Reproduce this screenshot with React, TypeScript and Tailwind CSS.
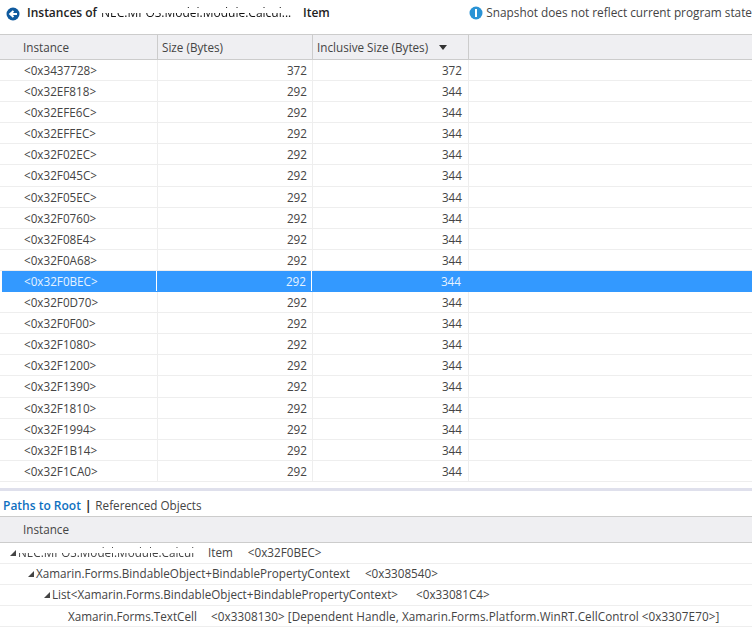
const rows = [
  ["<0x3437728>", "372", "372"],
  ["<0x32EF818>", "292", "344"],
  ["<0x32EFE6C>", "292", "344"],
  ["<0x32EFFEC>", "292", "344"],
  ["<0x32F02EC>", "292", "344"],
  ["<0x32F045C>", "292", "344"],
  ["<0x32F05EC>", "292", "344"],
  ["<0x32F0760>", "292", "344"],
  ["<0x32F08E4>", "292", "344"],
  ["<0x32F0A68>", "292", "344"],
  ["<0x32F0BEC>", "292", "344"],
  ["<0x32F0D70>", "292", "344"],
  ["<0x32F0F00>", "292", "344"],
  ["<0x32F1080>", "292", "344"],
  ["<0x32F1200>", "292", "344"],
  ["<0x32F1390>", "292", "344"],
  ["<0x32F1810>", "292", "344"],
  ["<0x32F1994>", "292", "344"],
  ["<0x32F1B14>", "292", "344"],
  ["<0x32F1CA0>", "292", "344"],
];

function Caret() {
  return (
    <svg width="8" height="8" viewBox="0 0 8 8" className="shrink-0">
      <path d="M7 1 V7 H1 Z" fill="#444" />
    </svg>
  );
}

function Redacted({ text, className }: { text: string; className: string }) {
  return (
    <span className={`relative overflow-hidden whitespace-nowrap blur-[0.4px] ${className}`}>
      {text}
      <span className="absolute left-0 right-0 top-[4px] h-[5px] bg-white" />
    </span>
  );
}

function Row({ cells, selected }: { cells: string[]; selected: boolean }) {
  return (
    <div className={`flex h-[21.1px] items-center border-b ${selected ? "ml-[2px] border-[#3399ff] bg-[#3399ff] text-[#e6f3ff]" : "border-[#eeeeee]"}`}>
      <div className={`h-full border-r leading-[21px] ${selected ? "w-[155px] border-white pl-[22px]" : "w-[158px] border-[#eeeeee] pl-[24px]"}`}>{cells[0]}</div>
      <div className={`h-full w-[155px] border-r pr-[5px] text-right leading-[21px] ${selected ? "border-white" : "border-[#eeeeee]"}`}>{cells[1]}</div>
      <div className={`h-full w-[156px] border-r pr-[6px] text-right leading-[21px] ${selected ? "border-[#3399ff]" : "border-[#eeeeee]"}`}>{cells[2]}</div>
    </div>
  );
}

function TreeRow({ indent, caret, children }: { indent: string; caret: boolean; children: React.ReactNode }) {
  return (
    <div className={`flex h-[21.1px] items-center whitespace-pre border-b border-[#eeeeee] ${indent}`}>
      {caret && <span className="mr-[1px]"><Caret /></span>}
      {children}
    </div>
  );
}

export default function App() {
  return (
    <div className="h-[638px] w-[752px] overflow-hidden bg-white font-['Open_Sans','Noto_Sans',sans-serif] text-[11.7px] text-[#444]">
      {/* Title bar */}
      <div className="flex h-[34px] items-start justify-between pt-[4px] pl-[6px]">
        <div className="flex items-center text-[12px] font-semibold text-[#222]">
          <svg width="14" height="14" viewBox="0 0 14 14" className="mt-[1px] mr-[7px]">
            <circle cx="7" cy="7" r="6.5" fill="#0f5a9e" />
            <path d="M11 7 H5 M7.5 4 L4.2 7 L7.5 10" fill="none" stroke="white" strokeWidth="2" />
          </svg>
          <span>Instances of</span>
          <Redacted text="NEC.MPOS.Model.Module.Calcul..." className="mx-[4px] w-[198px] font-normal text-[#111]" />
          <span>Item</span>
        </div>
        <div className="flex items-center whitespace-nowrap text-[11.8px]">
          <svg width="14" height="14" viewBox="0 0 14 14" className="mr-[3px]">
            <circle cx="7" cy="7" r="6.5" fill="#2a93d5" />
            <rect x="6" y="3" width="2" height="8" fill="white" />
          </svg>
          Snapshot does not reflect current program state
        </div>
      </div>

      {/* Instances table */}
      <div className="flex h-[26px] items-center border-y border-[#cccccc] bg-[#efeff2] leading-[24px]">
        <div className="h-full w-[158px] border-r border-[#cccccc] pl-[23px]">Instance</div>
        <div className="h-full w-[155px] border-r border-[#cccccc] pl-[4px]">Size (Bytes)</div>
        <div className="flex h-full w-[156px] items-center border-r border-[#cccccc] pl-[4px]">
          Inclusive Size (Bytes)
          <svg width="8" height="5" viewBox="0 0 8 5" className="ml-[11px]">
            <path d="M0 0 H8 L4 5 Z" fill="#333" />
          </svg>
        </div>
      </div>
      <div className="h-[428px]">
        {rows.map((r, i) => (
          <Row key={r[0]} cells={r} selected={i === 10} />
        ))}
      </div>

      {/* Splitter */}
      <div className="h-[3px] bg-[#dfe0ec]" />

      {/* Paths panel */}
      <div className="flex h-[25px] items-center pt-[4px] pl-[3px]">
        <span className="text-[12px] font-semibold text-[#0e70c0]">Paths to Root</span>
        <span className="mx-[4px] font-bold text-[#222]">|</span>
        <span className="text-[11.7px]">Referenced Objects</span>
      </div>
      <div className="h-[27px] border-y border-[#cccccc] bg-[#efeff2] pl-[23px] leading-[25px]">Instance</div>
      <div>
        <TreeRow indent="pl-[9px]" caret>
          <Redacted text="NEC.MPOS.Model.Module.Calcul" className="w-[180px]" />
          <span className="ml-[10px]">Item</span>
          <span className="ml-[15px]">{"<0x32F0BEC>"}</span>
        </TreeRow>
        <TreeRow indent="pl-[27px]" caret>
          <span>Xamarin.Forms.BindableObject+BindablePropertyContext</span>
          <span className="ml-[15px]">{"<0x3308540>"}</span>
        </TreeRow>
        <TreeRow indent="pl-[43px]" caret>
          <span>{"List<Xamarin.Forms.BindableObject+BindablePropertyContext>"}</span>
          <span className="ml-[18px]">{"<0x33081C4>"}</span>
        </TreeRow>
        <TreeRow indent="pl-[68px]" caret={false}>
          <span>Xamarin.Forms.TextCell</span>
          <span className="ml-[14px] tracking-[0.07px]">{"<0x3308130> [Dependent Handle, Xamarin.Forms.Platform.WinRT.CellControl <0x3307E70>]"}</span>
        </TreeRow>
      </div>
    </div>
  );
}
